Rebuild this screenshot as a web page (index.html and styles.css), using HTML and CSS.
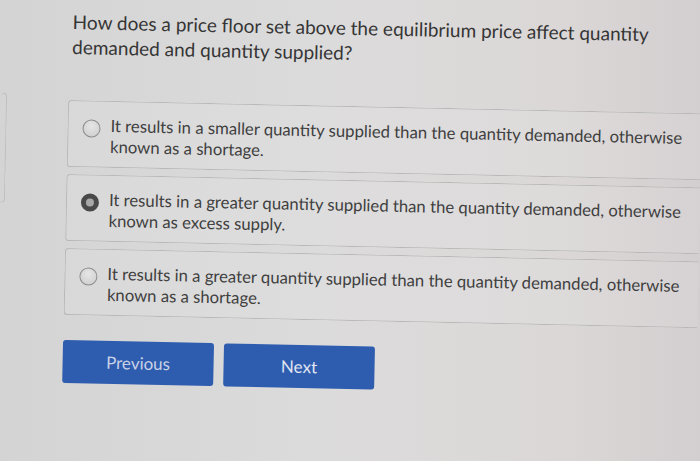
FILE: index.html
```html
<!DOCTYPE html>
<html>
<head>
<meta charset="utf-8">
<link rel="stylesheet" href="styles.css">
</head>
<body>
<div class="page">
  <div class="side"></div>
  <main class="main">
    <h1 class="question">How does a price floor set above the equilibrium price affect quantity demanded and quantity supplied?</h1>
    <div class="options">
      <label class="option">
        <span class="radio"></span>
        <span class="text">It results in a smaller quantity supplied than the quantity demanded, otherwise known as a shortage.</span>
      </label>
      <label class="option selected">
        <span class="radio"></span>
        <span class="text">It results in a greater quantity supplied than the quantity demanded, otherwise known as excess supply.</span>
      </label>
      <label class="option">
        <span class="radio"></span>
        <span class="text">It results in a greater quantity supplied than the quantity demanded, otherwise known as a shortage.</span>
      </label>
    </div>
    <div class="buttons">
      <button class="btn prev">Previous</button>
      <button class="btn next">Next</button>
    </div>
  </main>
</div>
</body>
</html>
```
FILE: styles.css
```css
html, body {
  margin: 0;
  padding: 0;
}
body {
  width: 700px;
  height: 461px;
  overflow: hidden;
  background: linear-gradient(90deg, #d5d4d4 0%, #dcdbdb 45%, #dbd7d7 80%, #d3cfd0 100%);
  font-family: Lato, "Open Sans", sans-serif;
  color: #3a3939;
}
.page {
  display: flex;
  align-items: flex-start;
  width: 700px;
  transform: rotate(1.2deg);
  transform-origin: 66px 200px;
}
.side {
  width: 4px;
  height: 108px;
  margin-top: 94px;
  border: 1px solid #bfbebe;
  border-left: none;
  border-radius: 0 4px 4px 0;
  flex: none;
}
.main {
  margin-left: 61px;
  flex: 1;
  min-width: 0;
}
.question {
  margin: 9px 0 0 3px;
  font-size: 19px;
  font-weight: 400;
  line-height: 25px;
  max-width: 610px;
  color: #353535;
}
.options {
  margin-top: 41px;
  display: flex;
  flex-direction: column;
  gap: 7px;
}
.option {
  box-sizing: border-box;
  height: 67px;
  display: flex;
  align-items: flex-start;
  gap: 10px;
  border: 1px solid #b9b8b8;
  border-right: none;
  border-radius: 4px 0 0 4px;
  padding: 14px 0 0 14px;
  background: rgba(255, 255, 255, 0.08);
}
.radio {
  box-sizing: border-box;
  width: 18px;
  height: 18px;
  border-radius: 50%;
  border: 1.5px solid #8e8d8d;
  background: radial-gradient(circle at 50% 35%, #e6e6e6 0%, #d4d3d3 70%, #c4c3c3 100%);
  margin-top: 4px;
  flex: none;
}
.selected .radio {
  border: 5px solid #4a4949;
  background: #a9a8a8;
}
.text {
  font-size: 16.7px;
  line-height: 21px;
  max-width: 600px;
  color: #403f3f;
}
.buttons {
  display: flex;
  gap: 10px;
  margin-top: 25px;
}
.btn {
  width: 151px;
  height: 43px;
  background: #2e5db0;
  border: none;
  border-radius: 3px;
  font-family: Lato, sans-serif;
  font-size: 17px;
  padding: 0;
}
.prev {
  color: #c9d1e6;
}
.next {
  color: #e2e6f0;
}
```
